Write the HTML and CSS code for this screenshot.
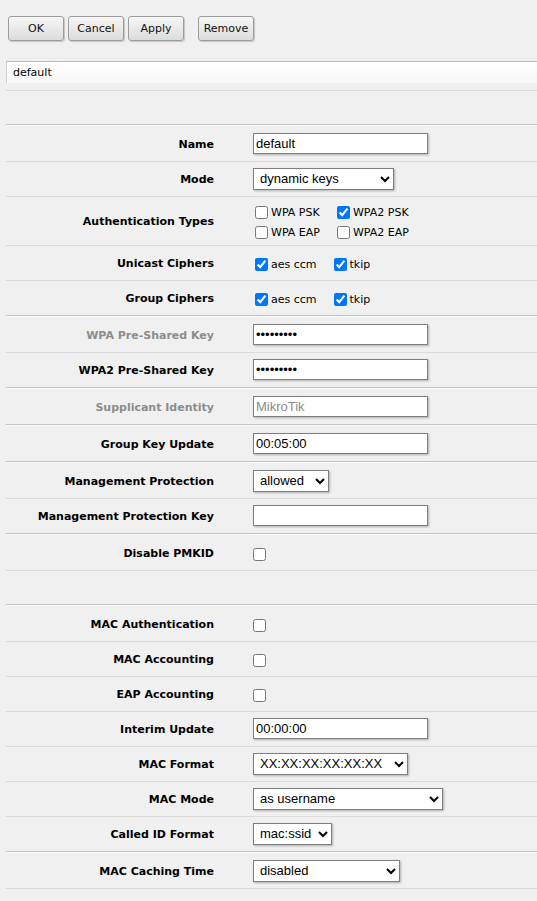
FILE: index.html
```html
<!DOCTYPE html>
<html>
<head>
<meta charset="utf-8">
<link rel="stylesheet" href="styles.css">
</head>
<body>
<div class="toolbar">
  <button class="btn">OK</button>
  <button class="btn">Cancel</button>
  <button class="btn">Apply</button>
  <button class="btn btn-sep">Remove</button>
</div>
<div class="title">default</div>
<div class="spacer first"></div>

<div class="group">
  <div class="row"><span class="lbl">Name</span><div class="ctl"><input class="txt" type="text" value="default"></div></div>
  <div class="row"><span class="lbl">Mode</span><div class="ctl"><select class="sel w-mode"><option>dynamic keys</option></select></div></div>
  <div class="row tall"><span class="lbl">Authentication Types</span>
    <div class="ctl"><div class="cbgrid">
      <label class="cbi"><input type="checkbox">WPA PSK</label>
      <label class="cbi"><input type="checkbox" checked>WPA2 PSK</label>
      <label class="cbi"><input type="checkbox">WPA EAP</label>
      <label class="cbi"><input type="checkbox">WPA2 EAP</label>
    </div></div>
  </div>
  <div class="row"><span class="lbl">Unicast Ciphers</span>
    <div class="ctl"><div class="cbline">
      <label class="cbi"><input type="checkbox" checked>aes ccm</label>
      <label class="cbi"><input type="checkbox" checked>tkip</label>
    </div></div>
  </div>
  <div class="row last"><span class="lbl">Group Ciphers</span>
    <div class="ctl"><div class="cbline">
      <label class="cbi"><input type="checkbox" checked>aes ccm</label>
      <label class="cbi"><input type="checkbox" checked>tkip</label>
    </div></div>
  </div>
</div>

<div class="group">
  <div class="row"><span class="lbl dim">WPA Pre-Shared Key</span><div class="ctl"><input class="txt" type="password" value="mikrotik1"></div></div>
  <div class="row last"><span class="lbl">WPA2 Pre-Shared Key</span><div class="ctl"><input class="txt" type="password" value="mikrotik1"></div></div>
</div>

<div class="group">
  <div class="row last"><span class="lbl dim">Supplicant Identity</span><div class="ctl"><input class="txt dimtxt" type="text" value="MikroTik"></div></div>
</div>

<div class="group">
  <div class="row last"><span class="lbl">Group Key Update</span><div class="ctl"><input class="txt" type="text" value="00:05:00"></div></div>
</div>

<div class="group">
  <div class="row"><span class="lbl">Management Protection</span><div class="ctl"><select class="sel w-mp"><option>allowed</option></select></div></div>
  <div class="row last"><span class="lbl">Management Protection Key</span><div class="ctl"><input class="txt" type="text" value=""></div></div>
</div>

<div class="group">
  <div class="row"><span class="lbl">Disable PMKID</span><div class="ctl"><input class="cb" type="checkbox"></div></div>
  <div class="spacer"></div>
</div>

<div class="group">
  <div class="row"><span class="lbl">MAC Authentication</span><div class="ctl"><input class="cb" type="checkbox"></div></div>
  <div class="row"><span class="lbl">MAC Accounting</span><div class="ctl"><input class="cb" type="checkbox"></div></div>
  <div class="row"><span class="lbl">EAP Accounting</span><div class="ctl"><input class="cb" type="checkbox"></div></div>
  <div class="row"><span class="lbl">Interim Update</span><div class="ctl"><input class="txt" type="text" value="00:00:00"></div></div>
  <div class="row"><span class="lbl">MAC Format</span><div class="ctl"><select class="sel w-fmt"><option>XX:XX:XX:XX:XX:XX</option></select></div></div>
  <div class="row"><span class="lbl">MAC Mode</span><div class="ctl"><select class="sel w-mode2"><option>as username</option></select></div></div>
  <div class="row last"><span class="lbl">Called ID Format</span><div class="ctl"><select class="sel w-cid"><option>mac:ssid</option></select></div></div>
</div>

<div class="group">
  <div class="row"><span class="lbl">MAC Caching Time</span><div class="ctl"><select class="sel w-cache"><option>disabled</option></select></div></div>
</div>
</body>
</html>
```

FILE: styles.css
```css
html, body {
  margin: 0;
  padding: 0;
  background: #f0f0f0;
  font-family: "DejaVu Sans", Verdana, sans-serif;
  font-size: 11px;
  color: #000;
}

.toolbar {
  display: flex;
  gap: 4px;
  padding: 16px 0 0 8px;
}

.btn {
  width: 56px;
  height: 25px;
  box-sizing: border-box;
  padding: 0 4px;
  border: 1px solid #9c9c9c;
  border-radius: 3px;
  background: linear-gradient(#f6f6f6, #dcdcdc);
  box-shadow: 1px 1px 1px rgba(0, 0, 0, 0.18);
  font-family: "DejaVu Sans", Verdana, sans-serif;
  font-size: 11px;
  color: #111;
}

.btn-sep {
  margin-left: 10px;
}

.title {
  margin: 20px 0 0 6px;
  height: 21px;
  line-height: 21px;
  padding-left: 6px;
  border-top: 1px solid #bdbdbd;
  border-left: 1px solid #d0d0d0;
  background: linear-gradient(#ffffff, #f7f7f7);
  font-size: 11px;
}

.spacer {
  height: 33px;
}

.spacer.first {
  margin: 7px 0 0 6px;
  border-top: 1px solid #dadada;
}

.group {
  margin-left: 6px;
  border-top: 1px solid #c2c2c2;
  padding-top: 2px;
  box-shadow: inset 0 1px 0 #fbfbfb;
}

.row {
  display: grid;
  grid-template-columns: 208px 1fr;
  column-gap: 39px;
  align-items: center;
  height: 34px;
  border-bottom: 1px solid #dadada;
}

.row.tall {
  height: 48px;
}

.row.last {
  border-bottom: none;
}

.lbl {
  text-align: right;
  font-weight: bold;
  white-space: nowrap;
}

.lbl.dim {
  color: #8c8c8c;
}

.ctl {
  display: flex;
  align-items: center;
}

.txt {
  box-sizing: border-box;
  width: 175px;
  height: 21px;
  margin: 0 0 1px 0;
  padding: 1px 2px;
  border: 1px solid #7f7f7f;
  border-radius: 0;
  background: #fff;
  box-shadow: 1px 1px 2px rgba(0, 0, 0, 0.28);
  font-family: "Liberation Sans", Arial, sans-serif;
  font-size: 13px;
  color: #000;
  outline: none;
}

.txt.dimtxt {
  color: #8a8a8a;
}

.sel {
  box-sizing: border-box;
  height: 22px;
  margin: 0 0 1px 0;
  padding: 0 0 0 2px;
  border: 1px solid #7f7f7f;
  border-radius: 0;
  background-color: #fff;
  box-shadow: 1px 1px 2px rgba(0, 0, 0, 0.28);
  font-family: "Liberation Sans", Arial, sans-serif;
  font-size: 13px;
  color: #000;
}

.w-mode { width: 141px; }
.w-mp { width: 76px; }
.w-fmt { width: 155px; }
.w-mode2 { width: 190px; }
.w-cid { width: 79px; }
.w-cache { width: 147px; }

.cb {
  width: 13px;
  height: 13px;
  margin: 2px 0 0 0;
}

.cbgrid {
  display: grid;
  grid-template-columns: auto auto;
  grid-auto-rows: 20px;
  column-gap: 15px;
  justify-content: start;
  padding-top: 3px;
}

.cbline {
  display: flex;
  gap: 15px;
  padding-top: 2px;
}

.cbi {
  display: flex;
  align-items: center;
  white-space: nowrap;
}

.cbi input {
  width: 13px;
  height: 13px;
  margin: 0 3px 0 2px;
}
```
